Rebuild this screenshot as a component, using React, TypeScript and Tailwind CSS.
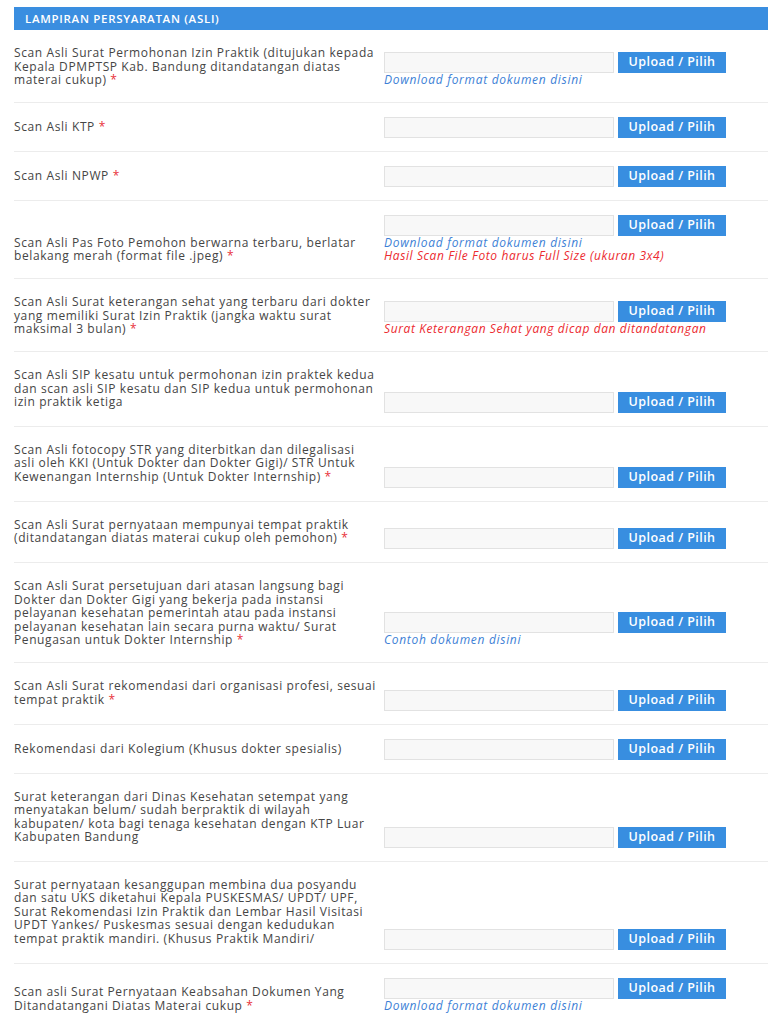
type Note = { text: string; kind: "link" | "warn" };

type Row = {
  lines: string[];
  required?: boolean;
  notes?: Note[];
};

const DL: Note = { text: "Download format dokumen disini", kind: "link" };

const ROWS: Row[] = [
  {
    lines: [
      "Scan Asli Surat Permohonan Izin Praktik (ditujukan kepada",
      "Kepala DPMPTSP Kab. Bandung ditandatangan diatas",
      "materai cukup)",
    ],
    required: true,
    notes: [DL],
  },
  { lines: ["Scan Asli KTP"], required: true },
  { lines: ["Scan Asli NPWP"], required: true },
  {
    lines: [
      "Scan Asli Pas Foto Pemohon berwarna terbaru, berlatar",
      "belakang merah (format file .jpeg)",
    ],
    required: true,
    notes: [DL, { text: "Hasil Scan File Foto harus Full Size (ukuran 3x4)", kind: "warn" }],
  },
  {
    lines: [
      "Scan Asli Surat keterangan sehat yang terbaru dari dokter",
      "yang memiliki Surat Izin Praktik (jangka waktu surat",
      "maksimal 3 bulan)",
    ],
    required: true,
    notes: [{ text: "Surat Keterangan Sehat yang dicap dan ditandatangan", kind: "warn" }],
  },
  {
    lines: [
      "Scan Asli SIP kesatu untuk permohonan izin praktek kedua",
      "dan scan asli SIP kesatu dan SIP kedua untuk permohonan",
      "izin praktik ketiga",
    ],
  },
  {
    lines: [
      "Scan Asli fotocopy STR yang diterbitkan dan dilegalisasi",
      "asli oleh KKI (Untuk Dokter dan Dokter Gigi)/ STR Untuk",
      "Kewenangan Internship (Untuk Dokter Internship)",
    ],
    required: true,
  },
  {
    lines: [
      "Scan Asli Surat pernyataan mempunyai tempat praktik",
      "(ditandatangan diatas materai cukup oleh pemohon)",
    ],
    required: true,
  },
  {
    lines: [
      "Scan Asli Surat persetujuan dari atasan langsung bagi",
      "Dokter dan Dokter Gigi yang bekerja pada instansi",
      "pelayanan kesehatan pemerintah atau pada instansi",
      "pelayanan kesehatan lain secara purna waktu/ Surat",
      "Penugasan untuk Dokter Internship",
    ],
    required: true,
    notes: [{ text: "Contoh dokumen disini", kind: "link" }],
  },
  {
    lines: [
      "Scan Asli Surat rekomendasi dari organisasi profesi, sesuai",
      "tempat praktik",
    ],
    required: true,
  },
  { lines: ["Rekomendasi dari Kolegium (Khusus dokter spesialis)"] },
  {
    lines: [
      "Surat keterangan dari Dinas Kesehatan setempat yang",
      "menyatakan belum/ sudah berpraktik di wilayah",
      "kabupaten/ kota bagi tenaga kesehatan dengan KTP Luar",
      "Kabupaten Bandung",
    ],
  },
  {
    lines: [
      "Surat pernyataan kesanggupan membina dua posyandu",
      "dan satu UKS diketahui Kepala PUSKESMAS/ UPDT/ UPF,",
      "Surat Rekomendasi Izin Praktik dan Lembar Hasil Visitasi",
      "UPDT Yankes/ Puskesmas sesuai dengan kedudukan",
      "tempat praktik mandiri. (Khusus Praktik Mandiri/",
    ],
  },
  {
    lines: [
      "Scan asli Surat Pernyataan Keabsahan Dokumen Yang",
      "Ditandatangani Diatas Materai cukup",
    ],
    required: true,
    notes: [DL],
  },
];

function UploadRow({ row }: { row: Row }) {
  const last = row.lines.length - 1;
  return (
    // label and field share the baseline of their last lines
    <div className="grid grid-cols-[370px_1fr] border-b border-[#ececec] pt-[14px] pb-[13px] [align-items:last_baseline]">
      <p className="whitespace-nowrap pt-[2px] text-[12px] leading-[13.5px] tracking-[0.6px] text-[#454545]">
        {row.lines.map((line, i) => (
          <span key={i}>
            {line}
            {row.required && i === last && <span className="text-[#e8303a]"> *</span>}
            {i < last && <br />}
          </span>
        ))}
      </p>
      <div>
        <div className="flex gap-[4px]">
          <input
            readOnly
            className="h-[21px] w-[230px] border border-[#e2e2e2] bg-[#f8f8f8] text-[12px] outline-none"
          />
          <button className="flex h-[21px] w-[108px] items-center justify-center bg-[#388ee0] text-[12.5px] font-semibold tracking-[0.45px] text-white">
            Upload / Pilih
          </button>
        </div>
        {row.notes && (
          <p className="whitespace-nowrap pb-[3px] text-[12px] italic leading-[13px]">
            {row.notes.map((n, i) => (
              <span key={i}>
                {i > 0 && <br />}
                <span
                  className={
                    n.kind === "link"
                      ? "tracking-[0.7px] text-[#3d7fd6]"
                      : "tracking-[0.6px] text-[#ec2a2f]"
                  }
                >
                  {n.text}
                </span>
              </span>
            ))}
          </p>
        )}
      </div>
    </div>
  );
}

export default function App() {
  return (
    <div
      className="h-[1024px] overflow-hidden bg-white pl-[14px] pt-[7px]"
      style={{ fontFamily: '"Open Sans", "Liberation Sans", sans-serif' }}
    >
      <div className="flex h-[23px] items-center bg-[#3a8ee0] px-[11px] text-[11.5px] font-semibold uppercase tracking-[0.7px] text-white">
        Lampiran Persyaratan (Asli)
      </div>
      {ROWS.map((row, i) => (
        <UploadRow key={i} row={row} />
      ))}
    </div>
  );
}
